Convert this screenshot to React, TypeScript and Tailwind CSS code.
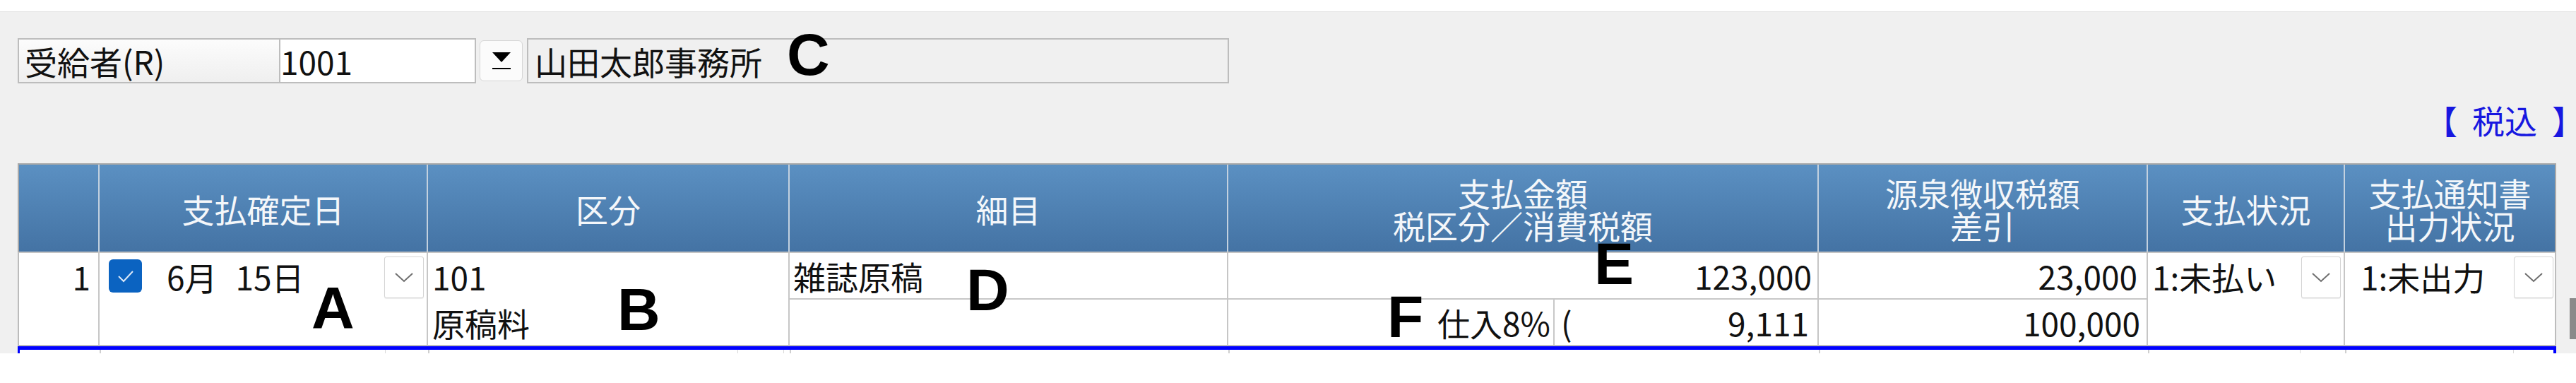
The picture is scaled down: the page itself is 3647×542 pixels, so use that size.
import React from "react"

const ui = "font-['Noto_Sans_CJK_JP','Noto_Sans',sans-serif]"
const mark = "absolute font-['Liberation_Sans',Arial,sans-serif] text-[84px] font-bold leading-[84px] text-black"

function Chevron() {
  return (
    <svg width="26" height="14" viewBox="0 0 26 14" fill="none">
      <polyline points="1,1 13,12 25,1" stroke="#6e6e6e" strokeWidth="2" />
    </svg>
  )
}

function CellDrop() {
  return (
    <div className="flex h-[59px] w-[56px] items-center justify-center rounded-[3px] border border-[#d4d4d4] bg-white shadow-[0_1px_1px_rgba(0,0,0,0.08)]">
      <Chevron />
    </div>
  )
}

function HeadCell({ children, first }: { children: React.ReactNode; first?: boolean }) {
  return (
    <div
      className={
        first
          ? "flex items-center justify-center"
          : "flex flex-col items-center justify-center border-l-2 border-[#c3d1df] text-center"
      }
    >
      {children}
    </div>
  )
}

export default function App() {
  return (
    <div className={`relative h-[542px] w-[3647px] overflow-hidden bg-white text-[46px] text-[#111] ${ui}`}>
      <div className="h-[17px] border-b border-[#e4e4e4] bg-white" />

      <div className="flex h-[483px] flex-col bg-[#f0f0f0]">
        {/* recipient row */}
        <div className="mt-[37px] flex h-[64px] items-start pl-[25px]">
          <div className="flex h-[64px] w-[372px] items-center border-2 border-[#bdbdbd] bg-gradient-to-b from-[#fcfcfc] to-[#efefef] pl-[8px]">
            受給者(R)
          </div>
          <div className="flex h-[64px] w-[277px] items-center border-2 border-l-0 border-[#bdbdbd] bg-white">
            1001
          </div>
          <div className="ml-[5px] mt-[3px] flex h-[58px] w-[61px] flex-col items-center justify-center gap-[8px] rounded-[6px] border border-[#d6d6d6] bg-[#fbfbfb]">
            <svg width="26" height="14" viewBox="0 0 26 14">
              <polygon points="0,0 26,0 13,14" fill="#000" />
            </svg>
            <div className="h-[2px] w-[26px] bg-black" />
          </div>
          <div className="ml-[6px] flex h-[64px] w-[994px] items-center border-2 border-[#bdbdbd] bg-[#f0f0f0] pl-[9px]">
            山田太郎事務所
          </div>
        </div>

        {/* tax mode */}
        <div className="flex h-[113px] justify-end pr-[10px] pt-[25px] leading-[52px] text-[#1717e0] [font-feature-settings:'palt']">
          <span>【</span>
          <span className="mx-[22px] [font-feature-settings:normal]">税込</span>
          <span>】</span>
        </div>

        <div className="flex">
          <div className="ml-[25px] w-[3594px]">
            {/* header */}
            <div className="grid h-[127px] grid-cols-[112px_465px_512px_621px_836px_466px_279px_299px] border-x-2 border-y-2 border-[#a9a9a9] border-b-[#c4c4c4] bg-gradient-to-b from-[#5b90c2] to-[#4473a4] leading-[46px] text-[#f4f7fa]">
              <HeadCell first>{""}</HeadCell>
              <HeadCell>支払確定日</HeadCell>
              <HeadCell>区分</HeadCell>
              <HeadCell>細目</HeadCell>
              <HeadCell>
                <div>支払金額</div>
                <div>税区分／消費税額</div>
              </HeadCell>
              <HeadCell>
                <div>源泉徴収税額</div>
                <div>差引</div>
              </HeadCell>
              <HeadCell>支払状況</HeadCell>
              <HeadCell>
                <div>支払通知書</div>
                <div>出力状況</div>
              </HeadCell>
            </div>

            {/* body row */}
            <div className="grid h-[132px] grid-cols-[112px_465px_512px_621px_836px_466px_279px_299px] border-x-2 border-b-2 border-[#bcbcbc] bg-white leading-[52px]">
              <div className="flex h-[65px] items-center justify-end pr-[11px]">1</div>

              <div className="flex border-l-2 border-[#c6c6c6]">
                <div className="flex h-[65px] flex-1 items-center pl-[13px]">
                  <div className="flex h-[47px] w-[47px] items-center justify-center rounded-[6px] bg-[#0b63c1]">
                    <svg width="24" height="18" viewBox="0 0 24 18" fill="none">
                      <polyline points="2,9 9,16 22,2" stroke="#dbe8f7" strokeWidth="2" />
                    </svg>
                  </div>
                  <span className="ml-[35px]">6月</span>
                  <span className="ml-[26px]">15日</span>
                </div>
                <div className="mr-[4px] mt-[5px]">
                  <CellDrop />
                </div>
              </div>

              <div className="flex flex-col border-l-2 border-[#c6c6c6] pl-[6px]">
                <div className="flex h-[65px] items-center">101</div>
                <div className="flex h-[65px] items-center">原稿料</div>
              </div>

              <div className="flex flex-col border-l-2 border-[#c6c6c6]">
                <div className="flex h-[66px] items-center border-b-2 border-[#c8c8c8] pl-[5px]">雑誌原稿</div>
                <div className="h-[64px]" />
              </div>

              <div className="flex flex-col border-l-2 border-[#c6c6c6]">
                <div className="flex h-[66px] items-center justify-end border-b-2 border-[#c8c8c8] pr-[8px]">123,000</div>
                <div className="flex h-[64px]">
                  <div className="flex w-[462px] items-center justify-end border-r-2 border-[#c8c8c8] pr-[4px]">仕入8%</div>
                  <div className="flex flex-1 items-center justify-between pl-[9px] pr-[12px]">
                    <span>(</span>
                    <span>9,111</span>
                  </div>
                </div>
              </div>

              <div className="flex flex-col border-l-2 border-[#c6c6c6]">
                <div className="flex h-[66px] items-center justify-end border-b-2 border-[#c8c8c8] pr-[13px]">23,000</div>
                <div className="flex h-[64px] items-center justify-end pr-[9px]">100,000</div>
              </div>

              <div className="flex border-l-2 border-[#c6c6c6]">
                <div className="flex h-[65px] flex-1 items-center pl-[6px]">1:未払い</div>
                <div className="mr-[4px] mt-[5px]">
                  <CellDrop />
                </div>
              </div>

              <div className="flex border-l-2 border-[#c6c6c6]">
                <div className="flex h-[65px] flex-1 items-center pl-[22px]">1:未出力</div>
                <div className="mr-[2px] mt-[5px]">
                  <CellDrop />
                </div>
              </div>
            </div>

            {/* next row, selected */}
            <div className="grid h-[10px] grid-cols-[113px_465px_512px_621px_836px_466px_279px_295px] border-l-[3px] border-r-[4px] border-t-[5px] border-[#0000ff] bg-white">
              <div />
              <div className="border-l-2 border-[#cfcfcf] pl-[402px]">
                <div className="h-full border-l border-[#d8d8d8]" />
              </div>
              <div className="border-l-2 border-[#cfcfcf] pl-[436px]">
                <div className="h-full w-[66px] border-x border-[#d8d8d8]" />
              </div>
              <div className="border-l-2 border-[#cfcfcf]" />
              <div className="border-l-2 border-[#cfcfcf]" />
              <div className="border-l-2 border-[#cfcfcf]" />
              <div className="border-l-2 border-[#cfcfcf] pl-[213px]">
                <div className="h-full border-l border-[#d8d8d8]" />
              </div>
              <div className="border-l-2 border-[#cfcfcf] pl-[236px]">
                <div className="h-full border-l border-[#d8d8d8]" />
              </div>
            </div>
          </div>

          {/* scrollbar */}
          <div className="w-[28px] pl-[19px] pt-[191px]">
            <div className="h-[58px] w-[9px] bg-[#8a8a8a]" />
          </div>
        </div>
      </div>

      <span className={`${mark} left-[441px] top-[394px]`}>A</span>
      <span className={`${mark} left-[874px] top-[396px]`}>B</span>
      <span className={`${mark} left-[1114px] top-[35px]`}>C</span>
      <span className={`${mark} left-[1368px] top-[368px]`}>D</span>
      <span className={`${mark} left-[2257px] top-[331px]`}>E</span>
      <span className={`${mark} left-[1964px] top-[406px]`}>F</span>
    </div>
  )
}
